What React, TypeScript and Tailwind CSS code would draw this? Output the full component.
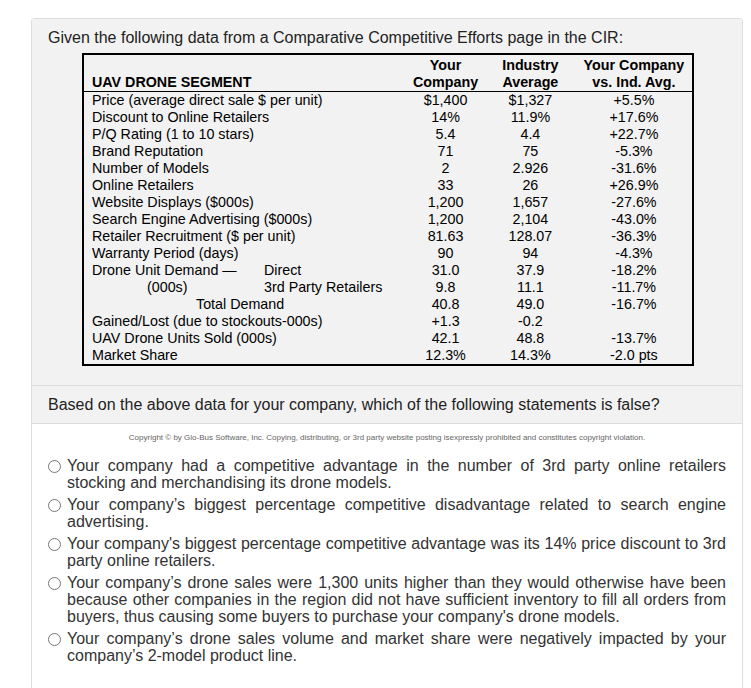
const rows: { label: string; you: string; ind: string; vs: string }[] = [
  { label: "Price (average direct sale $ per unit)", you: "$1,400", ind: "$1,327", vs: "+5.5%" },
  { label: "Discount to Online Retailers", you: "14%", ind: "11.9%", vs: "+17.6%" },
  { label: "P/Q Rating (1 to 10 stars)", you: "5.4", ind: "4.4", vs: "+22.7%" },
  { label: "Brand Reputation", you: "71", ind: "75", vs: "-5.3%" },
  { label: "Number of Models", you: "2", ind: "2.926", vs: "-31.6%" },
  { label: "Online Retailers", you: "33", ind: "26", vs: "+26.9%" },
  { label: "Website Displays ($000s)", you: "1,200", ind: "1,657", vs: "-27.6%" },
  { label: "Search Engine Advertising ($000s)", you: "1,200", ind: "2,104", vs: "-43.0%" },
  { label: "Retailer Recruitment ($ per unit)", you: "81.63", ind: "128.07", vs: "-36.3%" },
  { label: "Warranty Period (days)", you: "90", ind: "94", vs: "-4.3%" },
];

const tail: { label: string; you: string; ind: string; vs: string }[] = [
  { label: "Gained/Lost (due to stockouts-000s)", you: "+1.3", ind: "-0.2", vs: "" },
  { label: "UAV Drone Units Sold (000s)", you: "42.1", ind: "48.8", vs: "-13.7%" },
  { label: "Market Share", you: "12.3%", ind: "14.3%", vs: "-2.0 pts" },
];

const options = [
  "Your company had a competitive advantage in the number of 3rd party online retailers stocking and merchandising its drone models.",
  "Your company\u2019s biggest percentage competitive disadvantage related to search engine advertising.",
  "Your company's biggest percentage competitive advantage was its 14% price discount to 3rd party online retailers.",
  "Your company\u2019s drone sales were 1,300 units higher than they would otherwise have been because other companies in the region did not have sufficient inventory to fill all orders from buyers, thus causing some buyers to purchase your company's drone models.",
  "Your company\u2019s drone sales volume and market share were negatively impacted by your company\u2019s 2-model product line.",
];

function NumCells({ you, ind, vs }: { you: string; ind: string; vs: string }) {
  return (
    <>
      <td className="text-center">{you}</td>
      <td className="text-center">{ind}</td>
      <td className="text-center">{vs}</td>
    </>
  );
}

export default function App() {
  return (
    <div className="min-h-[688px] bg-white pt-[18px] pl-[31px] pr-[8px] font-['Liberation_Sans',Arial,sans-serif]">
      <div className="min-h-[680px] rounded-t-[4px] border border-[#dddddd] border-b-0">
        {/* question data */}
        <div className="bg-[#f2f2f2] px-4 pt-[10px] pb-[19px]">
          <p className="text-[16px] leading-[18px] text-[#222]">
            Given the following data from a Comparative Competitive Efforts page in the CIR:
          </p>
          <table className="ml-[34px] mt-[6px] w-[612px] table-fixed border-collapse border-2 border-black text-[14.3px] leading-[17px] text-black">
            <colgroup>
              <col className="w-[320px]" />
              <col className="w-[78px]" />
              <col className="w-[90px]" />
              <col className="w-[116px]" />
            </colgroup>
            <thead>
              <tr className="border-b border-black font-bold">
                <th className="pl-[8px] pt-[2px] text-left align-bottom">UAV DRONE SEGMENT</th>
                <th className="pt-[2px] text-center">Your<br />Company</th>
                <th className="pt-[2px] text-center">Industry<br />Average</th>
                <th className="pt-[2px] text-center">Your Company<br />vs. Ind. Avg.</th>
              </tr>
            </thead>
            <tbody>
              {rows.map((r) => (
                <tr key={r.label}>
                  <td className="pl-[8px]">{r.label}</td>
                  <NumCells {...r} />
                </tr>
              ))}
              <tr>
                <td className="pl-[8px]">
                  <div className="flex">
                    <span className="w-[172px]">Drone Unit Demand —</span>
                    <span>Direct</span>
                  </div>
                </td>
                <NumCells you="31.0" ind="37.9" vs="-18.2%" />
              </tr>
              <tr>
                <td className="pl-[8px]">
                  <div className="flex">
                    <span className="w-[172px] pl-[55px]">(000s)</span>
                    <span className="whitespace-nowrap">3rd Party Retailers</span>
                  </div>
                </td>
                <NumCells you="9.8" ind="11.1" vs="-11.7%" />
              </tr>
              <tr>
                <td className="pl-[112px]">Total Demand</td>
                <NumCells you="40.8" ind="49.0" vs="-16.7%" />
              </tr>
              {tail.map((r) => (
                <tr key={r.label}>
                  <td className="pl-[8px]">{r.label}</td>
                  <NumCells {...r} />
                </tr>
              ))}
              <tr>
                <td className="h-[1px]" colSpan={4}></td>
              </tr>
            </tbody>
          </table>
        </div>

        {/* prompt */}
        <div className="border-y border-[#dddddd] bg-[#f2f2f2] px-4 pt-[10px] pb-[9px]">
          <p className="text-[16px] leading-[18px] text-[#222]">
            Based on the above data for your company, which of the following statements is false?
          </p>
        </div>

        {/* answers */}
        <div className="bg-white px-4 pt-[9px]">
          <p className="text-center text-[8px] leading-[9px] text-[#666]">
            Copyright © by Glo-Bus Software, Inc. Copying, distributing, or 3rd party website posting isexpressly prohibited and constitutes copyright violation.
          </p>
          <ul className="mt-[15px] flex flex-col gap-[5px]">
            {options.map((o) => (
              <li key={o} className="flex items-start">
                <span className="mt-[3px] mr-[6px] h-[13px] w-[13px] shrink-0 rounded-full border border-[#767676] bg-white"></span>
                <span className="text-justify text-[16px] leading-[17px] text-[#333]">{o}</span>
              </li>
            ))}
          </ul>
        </div>
      </div>
    </div>
  );
}
